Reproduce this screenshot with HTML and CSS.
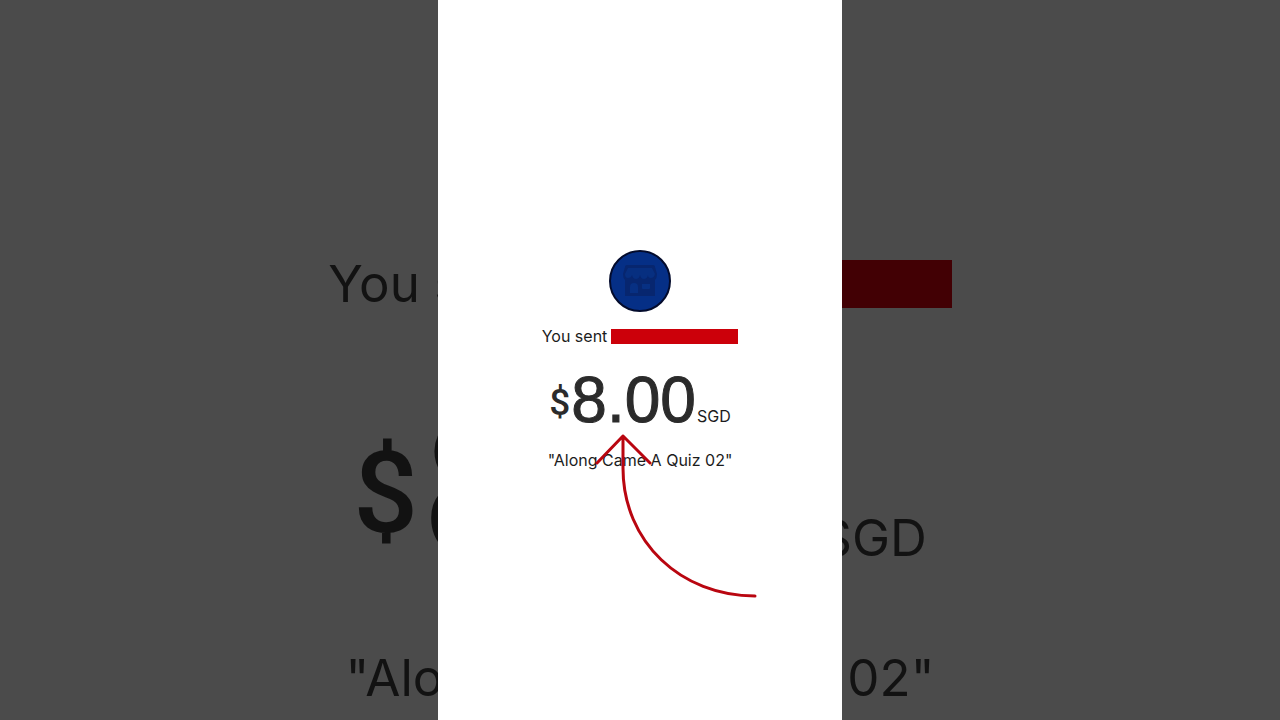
FILE: index.html
```html
<!DOCTYPE html>
<html lang="en">
<head>
<meta charset="utf-8">
<meta name="viewport" content="width=device-width, initial-scale=1">
<title>Payment sent</title>
<link rel="stylesheet" href="styles.css">
</head>
<body>
<div class="stage">
  <div class="backdrop" aria-hidden="true">
    <div class="recipient"><span>You sent</span><span class="redacted"></span></div>
    <div class="amount"><span class="symbol">$</span><span class="value">8.00</span><span class="currency">SGD</span></div>
    <div class="note">"Along Came A Quiz 02"</div>
  </div>
  <main class="receipt">
    <svg class="avatar" viewBox="0 0 62 62" role="img" aria-label="Store">
      <circle cx="31" cy="31" r="30" fill="#052f86" stroke="#030b2c" stroke-width="2"/>
      <path d="M18 15h26q2 0 2 2l2 7q0 4-2 6v16H16V30q-2-2-2-6l2-7q0-2 2-2z" fill="#07266f"/>
      <path d="M19 18h24l3 6q-1 4-4 4t-3-3q-1 4-4 4t-4-4q-1 4-4 4t-4-4q-1 3-4 3t-3-4z" fill="#072f80"/>
      <path d="M21 43v-6q0-4 4-4t4 4v6zM33 34h8v4q0 1-1 1h-6q-1 0-1-1z" fill="#073083"/>
    </svg>
    <div class="recipient"><span>You sent</span><span class="redacted"></span></div>
    <div class="amount"><span class="symbol">$</span><span class="value">8.00</span><span class="currency">SGD</span></div>
    <div class="note">"Along Came A Quiz 02"</div>
    <svg class="arrow" viewBox="0 0 166 166" aria-hidden="true">
      <path d="M3 29 29 2 56 29M29 2V34C29 108 87 162 161 162" fill="none" stroke="#b90610" stroke-width="3" stroke-linecap="round" stroke-linejoin="round"/>
    </svg>
  </main>
</div>
</body>
</html>
```
FILE: styles.css
```css
* { box-sizing: border-box; }
body { margin: 0; font-family: Inter, "Liberation Sans", sans-serif; }
.stage {
  display: grid;
  grid-template-columns: 1fr 404px 1fr;
  min-height: 100vh;
  overflow: hidden;
  background: #4b4b4b;
}
.backdrop, .receipt {
  grid-row: 1;
  display: flex;
  flex-direction: column;
  align-items: center;
  justify-content: center;
  white-space: nowrap;
}
.recipient { display: flex; align-items: center; }
.amount { display: flex; align-items: baseline; }
.symbol { align-self: center; font-family: Roboto, sans-serif; font-weight: 500; line-height: 1; }
.value { font-family: "Liberation Sans", Arial, sans-serif; }
.currency { line-height: 1; }

.receipt {
  position: relative;
  grid-column: 2;
  padding-top: 2px;
  background: #fff;
  color: #1c1c1c;
  font-size: 16px;
  line-height: 24px;
}
.receipt .avatar { width: 62px; height: 62px; }
.receipt .recipient { gap: 4px; margin-top: 12px; }
.receipt .redacted { width: 127px; height: 15px; background: #cc000a; }
.receipt .amount { gap: 1px; margin-top: 20px; line-height: 64px; color: #2b2b2b; }
.receipt .symbol { padding-top: 4px; font-size: 37px; }
.receipt .value { font-size: 64px; -webkit-text-stroke: 1px; }
.receipt .currency { color: #1c1c1c; }
.receipt .note { margin-top: 16px; }
.arrow {
  position: absolute;
  top: calc(50% + 74px);
  left: calc(50% - 46px);
  width: 166px;
  height: 166px;
}

.backdrop {
  grid-column: 1 / -1;
  height: 100vh;
  padding-top: 246px;
  justify-content: flex-start;
  color: #121212;
  font-size: 51px;
  line-height: 76px;
}
.backdrop .recipient { gap: 12px; }
.backdrop .redacted { width: 402px; height: 48px; background: #420004; }
.backdrop .amount { gap: 6px; margin-top: 64px; line-height: 202px; }
.backdrop .symbol { padding-top: 12px; font-size: 114px; }
.backdrop .value { font-size: 200px; -webkit-text-stroke: 3px; }
.backdrop .note { margin-top: 52px; }
```
